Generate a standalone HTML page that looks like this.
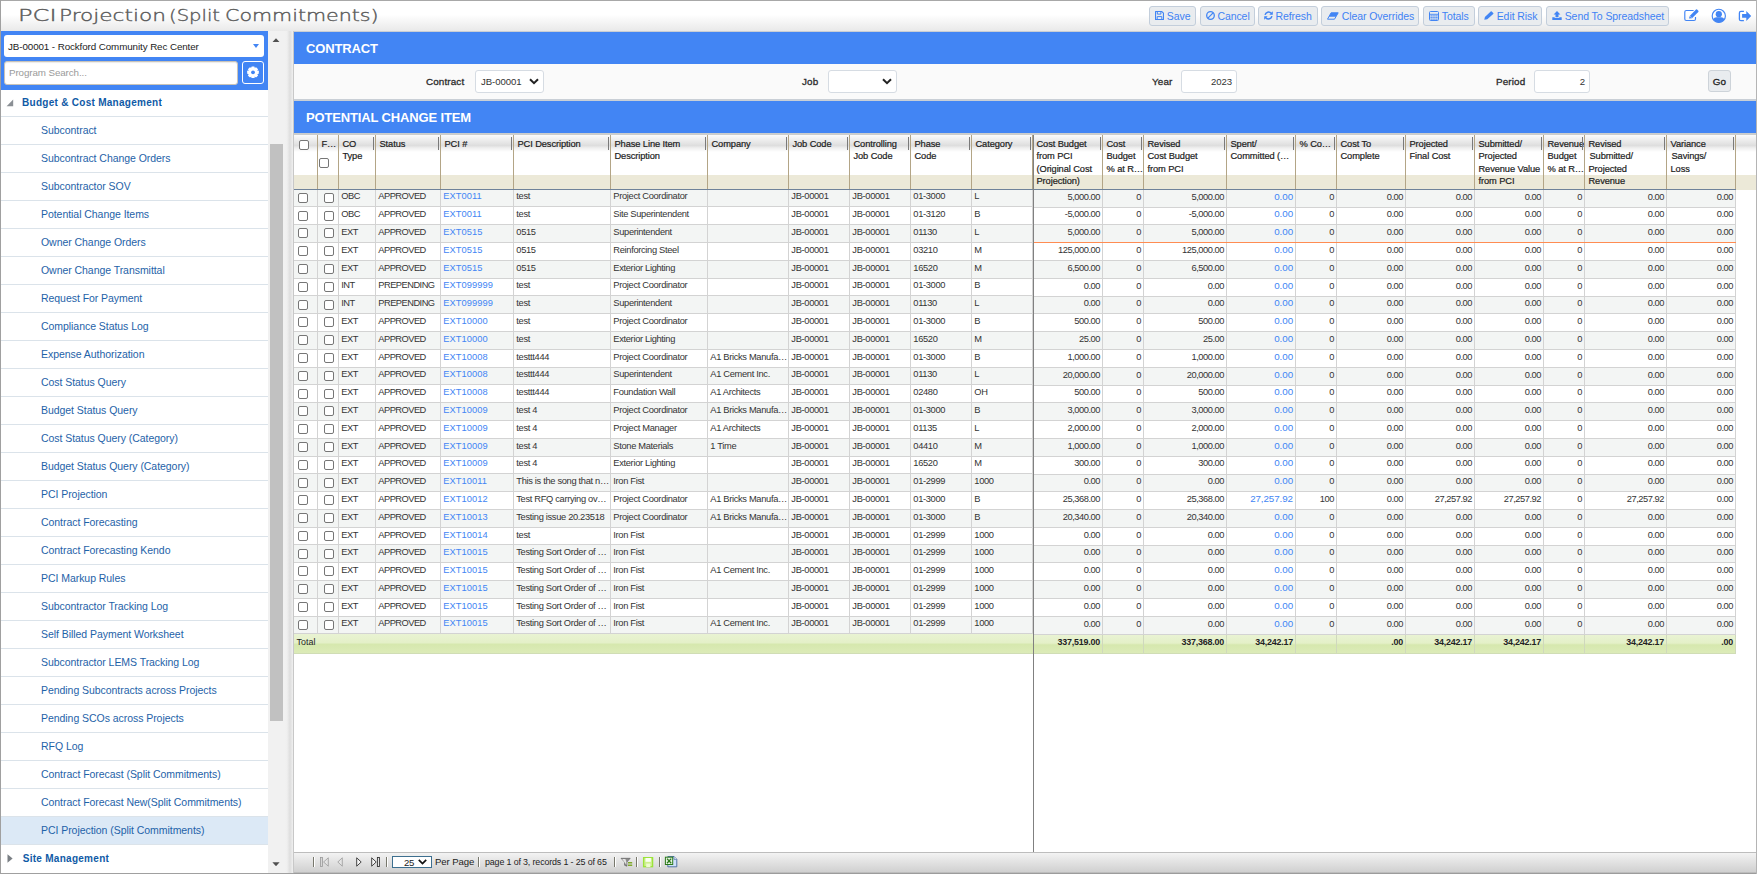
<!DOCTYPE html><html lang="en"><head><meta charset="utf-8"><title>PCI Projection (Split Commitments)</title><style>
*{box-sizing:border-box;margin:0;padding:0}
html,body{width:1757px;height:874px;overflow:hidden;background:#fff}
body{position:relative;font-family:"Liberation Sans",Arial,sans-serif;font-size:8.9px;color:#333}
.abs{position:absolute}
#top{left:0;top:0;width:1757px;height:31px;background:linear-gradient(#fff 0,#fff 45%,#e9e9e9 100%);border-top:1px solid #a8a8a8}
#lb{left:0;top:0;width:1px;height:874px;background:#a0a0a0;z-index:50}
#rb{left:1756px;top:0;width:1px;height:874px;background:#b4b4b4;z-index:50}
#bb{left:0;top:873px;width:294px;height:1px;background:#a0a0a0;z-index:50}
#title{left:20px;top:5.5px;width:370px;height:20px;font-family:"DejaVu Sans Light","DejaVu Sans",sans-serif;font-weight:200;font-size:15.2px;line-height:20px;color:#5a5a5a;white-space:nowrap;-webkit-text-stroke:.35px #5a5a5a}#title span{position:absolute;top:0;display:block;transform-origin:0 50%}
.tb{position:absolute;top:6px;height:20px;border:1px solid #c3cedb;border-radius:3px;background:#e9ecef;color:#3f82f4;font-size:10.5px;letter-spacing:-.07px;line-height:17px;white-space:nowrap;display:flex;align-items:center;padding-left:5px}
.tb svg{flex:none;margin-right:2.4px;margin-top:-1px;display:block}
.tb span{display:block}
.ti{position:absolute;top:8px}
#sbh{left:1px;top:31px;width:267px;height:59px;background:#4285f4}
#dd{left:4px;top:35px;width:260px;height:22px;background:#fff;border-radius:3px;font-size:9.8px;line-height:23px;padding-left:4px;color:#222;white-space:nowrap;letter-spacing:-.09px}
#ddarrow{left:252.8px;top:44px;width:0;height:0;border-left:3.5px solid transparent;border-right:3.5px solid transparent;border-top:4px solid #4285f4}
#srch{left:4px;top:61px;width:234px;height:24px;background:#fff;border:1px solid #c9c3b8;border-radius:3px;font-size:9.8px;line-height:22px;padding-left:4px;color:#9a9a9a;letter-spacing:-.1px;box-shadow:inset 0 1px 1px rgba(0,0,0,.08)}
#gear{left:242px;top:61px;width:22px;height:23px;border:1px solid #fff;border-radius:3px;background:#4285f4}
#nav{left:1px;top:90px;width:267px;height:783px;background:#fff;overflow:hidden}
.nh{position:absolute;left:0;width:267px;height:27px;border-bottom:1px solid #dbe3ea;font-weight:bold;font-size:10px;color:#0f5aa6;line-height:26px;padding-left:21px;letter-spacing:.28px;white-space:nowrap}
.ni{position:absolute;left:0;width:267px;height:28px;border-bottom:1px solid #dbe3ea;font-size:10.5px;color:#1e62a8;line-height:27.4px;padding-left:40px;white-space:nowrap;letter-spacing:-.05px}
.ni.sel{background:#dce9f6}
#vsb{left:268px;top:31px;width:17px;height:843px;background:#f1f1f1}
#vth{left:270px;top:144px;width:13px;height:577px;background:#c1c1c1}
#split{left:285px;top:31px;width:8px;height:843px;background:linear-gradient(to right,#f1f1f1 0,#efefef 25%,#dedede 62%,#e6e6e6 80%,#f0f0f0 100%)}
#splitb{left:293px;top:31px;width:1px;height:843px;background:#c8c8c8}
#main{left:294px;top:31px;width:1462px;height:843px;background:#fff}
.ph{position:absolute;left:294px;width:1462px;height:32px;background:#4285f4;color:#fff;font-weight:bold;font-size:13px;line-height:33px;padding-left:12px;white-space:nowrap;letter-spacing:-.15px}
#form{left:294px;top:64px;width:1462px;height:35px;background:#fafafa}
#formb{left:294px;top:99px;width:1462px;height:2px;background:#c9cfd6}
.fl{position:absolute;top:70px;height:22px;line-height:23.6px;font-size:9.9px;font-weight:normal;color:#2b2b2b;white-space:nowrap;-webkit-text-stroke:.3px #2b2b2b;letter-spacing:.12px}
.fi{position:absolute;top:70px;height:23px;border:1px solid #d6dce3;border-radius:3px;background:#fff;font-size:9.6px;line-height:22px;color:#333;white-space:nowrap;letter-spacing:-.06px}
#grid{left:294px;top:133px;width:1462px;height:719px;background:#fff;overflow:hidden;border-top:2px solid #cbcdcd}
#hdr{left:0;top:0;width:1462px;height:55px;background:
 linear-gradient(#6f8299,#6f8299) 0 54px/1442px 1px no-repeat,
 linear-gradient(#ece9d8,#ece9d8) 0 40px/100% 15px no-repeat,
 linear-gradient(#fbfbfb 0,#f3f3f3 3px,#dedede 10.500px,#efefef 13px,#fff 17px) 0 0/100% 17px no-repeat,#fff;
}
.hc{position:absolute;top:0;height:54px;border-right:1px solid #b3a586;font-size:9.3px;line-height:12.46px;color:#1c1c1c;padding:2.6px 0 0 3.5px;overflow:hidden;white-space:nowrap;letter-spacing:-.1px;-webkit-text-stroke:.2px #1c1c1c}
.hh{position:absolute;top:2px;width:1px;height:13px;background:#7a7a7a}
.row{position:absolute}
.c{position:absolute;top:0;height:100%;border-right:1px solid #d3d3d3;border-bottom:1px solid #d3d3d3;font-size:9.3px;line-height:12px;padding:0 0 0 2.3px;overflow:hidden;white-space:nowrap;color:#333;letter-spacing:-.32px}
.c.u{letter-spacing:-.52px}.c.r{text-align:right;padding:0 2px 0 0;letter-spacing:-.45px}
.c a{color:#4285f4;text-decoration:none;letter-spacing:.05px}.lnk{color:#4285f4;font-size:9.8px;letter-spacing:-.08px}
.odd .c{background:#f3f5f4}
.cb{position:absolute;width:10px;height:10px;border:1px solid #767676;border-radius:2px;background:#fff}
.tot{position:absolute;height:20px;background:linear-gradient(#e9f3d3 0,#e4f0c8 45%,#d6e8ae 55%,#dcebb8 100%);font-size:8.9px;line-height:12px;color:#222;border-bottom:1px solid #d0ddb5}
.tc{position:absolute;top:0;height:18px;border-right:1px solid #cfd8bd;font-weight:bold;text-align:right;padding:1px 2px 0 0;letter-spacing:-.2px;white-space:nowrap}
#vsplit{left:739px;top:0;width:1px;height:717px;background:#808080;z-index:5}
#orange{left:740px;top:107px;width:702px;height:1px;background:#ff8c52;z-index:6}
#pager{left:294px;top:852px;width:1462px;height:22px;border-top:1px solid #bdbdbd;background:linear-gradient(#f3f3f3 0,#e3e3e3 40%,#d0d0d0 91%,#9c9c9c 96%,#9c9c9c 100%);font-size:8.9px;color:#222}
.ps{position:absolute;top:4px;width:2px;height:10px;background:linear-gradient(to right,#77776c 0,#77776c 50%,#fff 50%,#fff 100%)}
.pt{position:absolute;top:0;line-height:18px;white-space:nowrap;font-size:9.6px;letter-spacing:-.1px}
</style></head><body><div class="abs" id="lb"></div><div class="abs" id="rb"></div><div class="abs" id="bb"></div><div class="abs" id="top"></div><div class="abs" id="title"><span style="left:-1.56px;transform:scaleX(1.593)">PCI</span> <span style="left:38.91px;transform:scaleX(1.424)">Projection</span> <span style="left:149.41px;transform:scaleX(1.289)">(Split</span> <span style="left:205.14px;transform:scaleX(1.357)">Commitments)</span> </div><div class="tb" style="left:1149.4px;width:46.3px"><svg width="9" height="9" viewBox="0 0 9 9"><path d="M.55 .55h6.300l1.600 1.600v6.300H.55z" fill="none" stroke="#4285f4" stroke-width="1.100" stroke-linejoin="round"/><path d="M2.300 .6v2.500h3.600V.6M2.200 8.400V5.600h4.600v2.800" fill="none" stroke="#4285f4" stroke-width="1"/></svg><span>Save</span></div><div class="tb" style="left:1200px;width:54.7px"><svg width="9" height="9" viewBox="0 0 9 9"><circle cx="4.500" cy="4.500" r="3.800" fill="none" stroke="#4285f4" stroke-width="1.300"/><path d="M1.900 7.100L7.100 1.900" stroke="#4285f4" stroke-width="1.300"/></svg><span>Cancel</span></div><div class="tb" style="left:1258px;width:59.6px"><svg width="9" height="9" viewBox="0 0 9 9"><path d="M1.100 3.900A3.500 3.500 0 0 1 7.200 2.300M7.900 5.100A3.500 3.500 0 0 1 1.800 6.700" fill="none" stroke="#4285f4" stroke-width="1.500"/><path d="M8.800 .3v3.500H5.300zM.2 8.700V5.200h3.500z" fill="#4285f4"/></svg><span>Refresh</span></div><div class="tb" style="left:1321.3px;width:98.2px"><svg width="12" height="8" viewBox="0 0 12 8" style="margin-top:0"><path d="M4.100 .8h7.100L7.500 7.200H.5z" fill="none" stroke="#4285f4" stroke-width="1" stroke-linejoin="round"/><path d="M4.100 .8h7.100L8.900 4.800H1.800z" fill="#4285f4"/></svg><span>Clear Overrides</span></div><div class="tb" style="left:1423.4px;width:51.2px"><svg width="10" height="10" viewBox="0 0 10 10"><rect x=".5" y=".5" width="9" height="9" rx="1" fill="none" stroke="#4285f4" stroke-width="1"/><path d="M.5 3.300h9" stroke="#4285f4" stroke-width=".9"/><path d="M1.500 4.700h7M1.500 6.400h7M1.500 8.100h7" stroke="#4285f4" stroke-width="1.100" stroke-dasharray="1.300 .6"/></svg><span>Totals</span></div><div class="tb" style="left:1478.3px;width:64.2px"><svg width="10" height="9" viewBox="0 0 10 9"><path d="M.3 8.800l.6-2.700L6.700 .4a.7.700 0 0 1 1 0l1.500 1.500a.7.700 0 0 1 0 1L3.300 8.300z" fill="#4285f4"/></svg><span>Edit Risk</span></div><div class="tb" style="left:1546.3px;width:123.2px"><svg width="10" height="9" viewBox="0 0 10 9"><path d="M5 0L8.400 3.600H6.500V6.300H3.500V3.600H1.600z" fill="#4285f4"/><path d="M.3 6.200H2.700V7.100H7.300V6.200H9.700V9H.3z" fill="#4285f4"/></svg><span>Send To Spreadsheet</span></div><svg class="abs" style="left:1680px;top:5px" width="76" height="22" viewBox="1680 5 76 22"><g fill="none" stroke="#4285f4"><path d="M1693.600 10.500H1686.300a1.500 1.500 0 0 0-1.500 1.500v7a1.500 1.500 0 0 0 1.500 1.500h7.700a1.500 1.500 0 0 0 1.500-1.500V17" stroke-width="1.150"/><circle cx="1718.800" cy="15.900" r="6.600" stroke-width="1.150"/><path d="M1743.900 11.400h-3a1.500 1.500 0 0 0-1.500 1.500v6.300a1.500 1.500 0 0 0 1.500 1.500h3" stroke-width="1.300"/></g><g fill="#4285f4"><path d="M1689 18.600l.7-2.700 6.300-6.300a.8.800 0 0 1 1.100 0l1.200 1.200a.8.800 0 0 1 0 1.100l-6.300 6.300z"/><circle cx="1718.800" cy="14.200" r="3.100"/><path d="M1713.300 19.600c.5-1.500 1.700-2.300 3.300-2.300h4.400c1.600 0 2.800.8 3.300 2.300a6.700 6.700 0 0 1-11 0z"/><path d="M1742.100 14.100h4.200v-3l4.900 4.850-4.900 4.950v-3.200h-4.200z"/></g><path d="M1690.100 16.300l1.300 1.300" stroke="#fff" stroke-width=".7" fill="none"/></svg><div class="abs" id="sbh"></div><div class="abs" id="dd">JB-00001 - Rockford Community Rec Center</div><div class="abs" id="ddarrow"></div><div class="abs" id="srch">Program Search...</div><div class="abs" id="gear"><svg width="20" height="21" viewBox="0 0 20 21" style="display:block"><g transform="translate(10 10.3) scale(1.12)"><g fill="#fff"><rect x="-1.500" y="-5.200" width="3" height="10.400" rx=".6"/><rect x="-1.500" y="-5.200" width="3" height="10.400" rx=".6" transform="rotate(45)"/><rect x="-1.500" y="-5.200" width="3" height="10.400" rx=".6" transform="rotate(90)"/><rect x="-1.500" y="-5.200" width="3" height="10.400" rx=".6" transform="rotate(135)"/><circle r="3.900"/></g><circle r="1.700" fill="#4285f4"/></g></svg></div><div class="abs" id="nav"><div class="nh" style="top:0">Budget &amp; Cost Management</div><svg class="abs" style="left:5px;top:9px" width="8" height="8" viewBox="0 0 8 8"><path d="M7.200 .6V7.200H.6z" fill="#8a8f94"/></svg><div class="ni" style="top:27px">Subcontract</div><div class="ni" style="top:55px">Subcontract Change Orders</div><div class="ni" style="top:83px">Subcontractor SOV</div><div class="ni" style="top:111px">Potential Change Items</div><div class="ni" style="top:139px">Owner Change Orders</div><div class="ni" style="top:167px">Owner Change Transmittal</div><div class="ni" style="top:195px">Request For Payment</div><div class="ni" style="top:223px">Compliance Status Log</div><div class="ni" style="top:251px">Expense Authorization</div><div class="ni" style="top:279px">Cost Status Query</div><div class="ni" style="top:307px">Budget Status Query</div><div class="ni" style="top:335px">Cost Status Query (Category)</div><div class="ni" style="top:363px">Budget Status Query (Category)</div><div class="ni" style="top:391px">PCI Projection</div><div class="ni" style="top:419px">Contract Forecasting</div><div class="ni" style="top:447px">Contract Forecasting Kendo</div><div class="ni" style="top:475px">PCI Markup Rules</div><div class="ni" style="top:503px">Subcontractor Tracking Log</div><div class="ni" style="top:531px">Self Billed Payment Worksheet</div><div class="ni" style="top:559px">Subcontractor LEMS Tracking Log</div><div class="ni" style="top:587px">Pending Subcontracts across Projects</div><div class="ni" style="top:615px">Pending SCOs across Projects</div><div class="ni" style="top:643px">RFQ Log</div><div class="ni" style="top:671px">Contract Forecast (Split Commitments)</div><div class="ni" style="top:699px">Contract Forecast New(Split Commitments)</div><div class="ni sel" style="top:727px">PCI Projection (Split Commitments)</div><div class="nh" style="top:755px;border-bottom:none;line-height:28.5px;padding-left:21.7px">Site Management</div><svg class="abs" style="left:6px;top:764px" width="6" height="9" viewBox="0 0 6 9"><path d="M.5 .3L5.600 4.500.5 8.700z" fill="#7a7f84"/></svg></div><div class="abs" id="vsb"></div><div class="abs" id="vth"></div><svg class="abs" style="left:272.400px;top:37.800px" width="8" height="4.500" viewBox="0 0 9 5"><path d="M4.500 .3L8.600 4.700H.4z" fill="#505050"/></svg><svg class="abs" style="left:272.400px;top:861.700px" width="8" height="4.500" viewBox="0 0 9 5"><path d="M4.500 4.700L8.600 .3H.4z" fill="#505050"/></svg><div class="abs" id="split"></div><div class="abs" id="splitb"></div><div class="abs" id="main"></div><div class="abs" style="left:294px;top:31px;width:1462px;height:1px;background:#c9ced4"></div><div class="ph" style="top:32px">CONTRACT</div><div class="abs" id="form"></div><div class="abs" id="formb"></div><div class="fl" style="left:426px">Contract</div><div class="fi" style="left:475px;width:69px;padding-left:5px">JB-00001<svg style="position:absolute;right:4.5px;top:6.8px" width="10" height="7" viewBox="0 0 10 7"><path d="M1 1.200L5 5.200 9 1.200" fill="none" stroke="#222" stroke-width="2"/></svg></div><div class="fl" style="left:802px">Job</div><div class="fi" style="left:828px;width:69px"><svg style="position:absolute;right:4.5px;top:6.8px" width="10" height="7" viewBox="0 0 10 7"><path d="M1 1.200L5 5.200 9 1.200" fill="none" stroke="#222" stroke-width="2"/></svg></div><div class="fl" style="left:1152px">Year</div><div class="fi" style="left:1181px;width:56px;text-align:right;padding-right:4px">2023</div><div class="fl" style="left:1496px">Period</div><div class="fi" style="left:1534px;width:56px;text-align:right;padding-right:4px">2</div><div class="fi" style="left:1708px;width:23px;text-align:center;background:#e9ecef;border-color:#cdd3d9;height:22px;line-height:21px;font-size:9.9px;letter-spacing:.1px;-webkit-text-stroke:.3px #222;color:#222">Go</div><div class="ph" style="top:101px">POTENTIAL CHANGE ITEM</div><div class="abs" id="grid"><div class="abs" id="hdr"><div class="hc" style="left:0px;width:24px"></div><div class="hc" style="left:24px;width:21px">F…</div><div class="hc" style="left:45px;width:37px">CO<br>Type</div><div class="hh" style="left:79px"></div><div class="hc" style="left:82px;width:65px">Status</div><div class="hh" style="left:144px"></div><div class="hc" style="left:147px;width:73px">PCI #</div><div class="hh" style="left:217px"></div><div class="hc" style="left:220px;width:97px">PCI Description</div><div class="hh" style="left:314px"></div><div class="hc" style="left:317px;width:97px">Phase Line Item<br>Description</div><div class="hh" style="left:411px"></div><div class="hc" style="left:414px;width:81px">Company</div><div class="hh" style="left:492px"></div><div class="hc" style="left:495px;width:61px">Job Code</div><div class="hh" style="left:553px"></div><div class="hc" style="left:556px;width:61px">Controlling<br>Job Code</div><div class="hh" style="left:614px"></div><div class="hc" style="left:617px;width:61px">Phase<br>Code</div><div class="hh" style="left:675px"></div><div class="hc" style="left:678px;width:61px">Category</div><div class="hh" style="left:736px"></div><div class="hc" style="left:739px;width:70px">Cost Budget<br>from PCI<br>(Original Cost<br>Projection)</div><div class="hh" style="left:806px"></div><div class="hc" style="left:809px;width:41px">Cost<br>Budget<br>% at R…</div><div class="hh" style="left:847px"></div><div class="hc" style="left:850px;width:83px">Revised<br>Cost Budget<br>from PCI</div><div class="hh" style="left:930px"></div><div class="hc" style="left:933px;width:69px">Spent/<br>Committed (…</div><div class="hh" style="left:999px"></div><div class="hc" style="left:1002px;width:41px">% Co…</div><div class="hh" style="left:1040px"></div><div class="hc" style="left:1043px;width:69px">Cost To<br>Complete</div><div class="hh" style="left:1109px"></div><div class="hc" style="left:1112px;width:69px">Projected<br>Final Cost</div><div class="hh" style="left:1178px"></div><div class="hc" style="left:1181px;width:69px">Submitted/<br>Projected<br>Revenue Value<br>from PCI</div><div class="hh" style="left:1247px"></div><div class="hc" style="left:1250px;width:41px">Revenue<br>Budget<br>% at R…</div><div class="hh" style="left:1288px"></div><div class="hc" style="left:1291px;width:82px">Revised<br><span style="margin-left:1px">Submitted/</span><br>Projected<br>Revenue</div><div class="hh" style="left:1370px"></div><div class="hc" style="left:1373px;width:69px">Variance<br><span style="margin-left:1px">Savings/</span><br>Loss</div><div class="hh" style="left:1439px"></div><div class="cb" style="left:5px;top:5px"></div><div class="cb" style="left:24.5px;top:23px"></div></div><div class="row odd" style="left:0;width:739px;top:55px;height:17px"><div class="c" style="left:0px;width:24px"><div class="cb" style="left:4px;top:3px"></div></div><div class="c" style="left:24px;width:21px"><div class="cb" style="left:6px;top:3px"></div></div><div class="c u" style="left:45px;width:37px">OBC</div><div class="c u" style="left:82px;width:65px">APPROVED</div><div class="c" style="left:147px;width:73px"><a>EXT0011</a></div><div class="c" style="left:220px;width:97px">test</div><div class="c" style="left:317px;width:97px">Project Coordinator</div><div class="c" style="left:414px;width:81px"></div><div class="c" style="left:495px;width:61px">JB-00001</div><div class="c" style="left:556px;width:61px">JB-00001</div><div class="c" style="left:617px;width:61px">01-3000</div><div class="c" style="left:678px;width:61px">L</div></div><div class="row odd" style="left:739px;width:703px;top:55px;height:18px"><div class="c r" style="left:0px;width:70px;padding-top:1px">5,000.00</div><div class="c r" style="left:70px;width:41px;padding-top:1px">0</div><div class="c r" style="left:111px;width:83px;padding-top:1px">5,000.00</div><div class="c r" style="left:194px;width:69px;padding-top:1px"><span class="lnk">0.00</span></div><div class="c r" style="left:263px;width:41px;padding-top:1px">0</div><div class="c r" style="left:304px;width:69px;padding-top:1px">0.00</div><div class="c r" style="left:373px;width:69px;padding-top:1px">0.00</div><div class="c r" style="left:442px;width:69px;padding-top:1px">0.00</div><div class="c r" style="left:511px;width:41px;padding-top:1px">0</div><div class="c r" style="left:552px;width:82px;padding-top:1px">0.00</div><div class="c r" style="left:634px;width:69px;padding-top:1px">0.00</div></div><div class="row" style="left:0;width:739px;top:72px;height:18px"><div class="c" style="left:0px;width:24px"><div class="cb" style="left:4px;top:4px"></div></div><div class="c" style="left:24px;width:21px"><div class="cb" style="left:6px;top:4px"></div></div><div class="c u" style="left:45px;width:37px;padding-top:1px">OBC</div><div class="c u" style="left:82px;width:65px;padding-top:1px">APPROVED</div><div class="c" style="left:147px;width:73px;padding-top:1px"><a>EXT0011</a></div><div class="c" style="left:220px;width:97px;padding-top:1px">test</div><div class="c" style="left:317px;width:97px;padding-top:1px">Site Superintendent</div><div class="c" style="left:414px;width:81px;padding-top:1px"></div><div class="c" style="left:495px;width:61px;padding-top:1px">JB-00001</div><div class="c" style="left:556px;width:61px;padding-top:1px">JB-00001</div><div class="c" style="left:617px;width:61px;padding-top:1px">01-3120</div><div class="c" style="left:678px;width:61px;padding-top:1px">B</div></div><div class="row" style="left:739px;width:703px;top:73px;height:17px"><div class="c r" style="left:0px;width:70px">-5,000.00</div><div class="c r" style="left:70px;width:41px">0</div><div class="c r" style="left:111px;width:83px">-5,000.00</div><div class="c r" style="left:194px;width:69px"><span class="lnk">0.00</span></div><div class="c r" style="left:263px;width:41px">0</div><div class="c r" style="left:304px;width:69px">0.00</div><div class="c r" style="left:373px;width:69px">0.00</div><div class="c r" style="left:442px;width:69px">0.00</div><div class="c r" style="left:511px;width:41px">0</div><div class="c r" style="left:552px;width:82px">0.00</div><div class="c r" style="left:634px;width:69px">0.00</div></div><div class="row odd" style="left:0;width:739px;top:90px;height:18px"><div class="c" style="left:0px;width:24px"><div class="cb" style="left:4px;top:3px"></div></div><div class="c" style="left:24px;width:21px"><div class="cb" style="left:6px;top:3px"></div></div><div class="c u" style="left:45px;width:37px;padding-top:1px">EXT</div><div class="c u" style="left:82px;width:65px;padding-top:1px">APPROVED</div><div class="c" style="left:147px;width:73px;padding-top:1px"><a>EXT0515</a></div><div class="c" style="left:220px;width:97px;padding-top:1px">0515</div><div class="c" style="left:317px;width:97px;padding-top:1px">Superintendent</div><div class="c" style="left:414px;width:81px;padding-top:1px"></div><div class="c" style="left:495px;width:61px;padding-top:1px">JB-00001</div><div class="c" style="left:556px;width:61px;padding-top:1px">JB-00001</div><div class="c" style="left:617px;width:61px;padding-top:1px">01130</div><div class="c" style="left:678px;width:61px;padding-top:1px">L</div></div><div class="row odd" style="left:739px;width:703px;top:90px;height:18px"><div class="c r" style="left:0px;width:70px;padding-top:1px">5,000.00</div><div class="c r" style="left:70px;width:41px;padding-top:1px">0</div><div class="c r" style="left:111px;width:83px;padding-top:1px">5,000.00</div><div class="c r" style="left:194px;width:69px;padding-top:1px"><span class="lnk">0.00</span></div><div class="c r" style="left:263px;width:41px;padding-top:1px">0</div><div class="c r" style="left:304px;width:69px;padding-top:1px">0.00</div><div class="c r" style="left:373px;width:69px;padding-top:1px">0.00</div><div class="c r" style="left:442px;width:69px;padding-top:1px">0.00</div><div class="c r" style="left:511px;width:41px;padding-top:1px">0</div><div class="c r" style="left:552px;width:82px;padding-top:1px">0.00</div><div class="c r" style="left:634px;width:69px;padding-top:1px">0.00</div></div><div class="row" style="left:0;width:739px;top:108px;height:18px"><div class="c" style="left:0px;width:24px"><div class="cb" style="left:4px;top:3px"></div></div><div class="c" style="left:24px;width:21px"><div class="cb" style="left:6px;top:3px"></div></div><div class="c u" style="left:45px;width:37px;padding-top:1px">EXT</div><div class="c u" style="left:82px;width:65px;padding-top:1px">APPROVED</div><div class="c" style="left:147px;width:73px;padding-top:1px"><a>EXT0515</a></div><div class="c" style="left:220px;width:97px;padding-top:1px">0515</div><div class="c" style="left:317px;width:97px;padding-top:1px">Reinforcing Steel</div><div class="c" style="left:414px;width:81px;padding-top:1px"></div><div class="c" style="left:495px;width:61px;padding-top:1px">JB-00001</div><div class="c" style="left:556px;width:61px;padding-top:1px">JB-00001</div><div class="c" style="left:617px;width:61px;padding-top:1px">03210</div><div class="c" style="left:678px;width:61px;padding-top:1px">M</div></div><div class="row" style="left:739px;width:703px;top:108px;height:18px"><div class="c r" style="left:0px;width:70px;padding-top:1px">125,000.00</div><div class="c r" style="left:70px;width:41px;padding-top:1px">0</div><div class="c r" style="left:111px;width:83px;padding-top:1px">125,000.00</div><div class="c r" style="left:194px;width:69px;padding-top:1px"><span class="lnk">0.00</span></div><div class="c r" style="left:263px;width:41px;padding-top:1px">0</div><div class="c r" style="left:304px;width:69px;padding-top:1px">0.00</div><div class="c r" style="left:373px;width:69px;padding-top:1px">0.00</div><div class="c r" style="left:442px;width:69px;padding-top:1px">0.00</div><div class="c r" style="left:511px;width:41px;padding-top:1px">0</div><div class="c r" style="left:552px;width:82px;padding-top:1px">0.00</div><div class="c r" style="left:634px;width:69px;padding-top:1px">0.00</div></div><div class="row odd" style="left:0;width:739px;top:126px;height:18px"><div class="c" style="left:0px;width:24px"><div class="cb" style="left:4px;top:3px"></div></div><div class="c" style="left:24px;width:21px"><div class="cb" style="left:6px;top:3px"></div></div><div class="c u" style="left:45px;width:37px;padding-top:1px">EXT</div><div class="c u" style="left:82px;width:65px;padding-top:1px">APPROVED</div><div class="c" style="left:147px;width:73px;padding-top:1px"><a>EXT0515</a></div><div class="c" style="left:220px;width:97px;padding-top:1px">0515</div><div class="c" style="left:317px;width:97px;padding-top:1px">Exterior Lighting</div><div class="c" style="left:414px;width:81px;padding-top:1px"></div><div class="c" style="left:495px;width:61px;padding-top:1px">JB-00001</div><div class="c" style="left:556px;width:61px;padding-top:1px">JB-00001</div><div class="c" style="left:617px;width:61px;padding-top:1px">16520</div><div class="c" style="left:678px;width:61px;padding-top:1px">M</div></div><div class="row odd" style="left:739px;width:703px;top:126px;height:18px"><div class="c r" style="left:0px;width:70px;padding-top:1px">6,500.00</div><div class="c r" style="left:70px;width:41px;padding-top:1px">0</div><div class="c r" style="left:111px;width:83px;padding-top:1px">6,500.00</div><div class="c r" style="left:194px;width:69px;padding-top:1px"><span class="lnk">0.00</span></div><div class="c r" style="left:263px;width:41px;padding-top:1px">0</div><div class="c r" style="left:304px;width:69px;padding-top:1px">0.00</div><div class="c r" style="left:373px;width:69px;padding-top:1px">0.00</div><div class="c r" style="left:442px;width:69px;padding-top:1px">0.00</div><div class="c r" style="left:511px;width:41px;padding-top:1px">0</div><div class="c r" style="left:552px;width:82px;padding-top:1px">0.00</div><div class="c r" style="left:634px;width:69px;padding-top:1px">0.00</div></div><div class="row" style="left:0;width:739px;top:144px;height:17px"><div class="c" style="left:0px;width:24px"><div class="cb" style="left:4px;top:3px"></div></div><div class="c" style="left:24px;width:21px"><div class="cb" style="left:6px;top:3px"></div></div><div class="c u" style="left:45px;width:37px">INT</div><div class="c u" style="left:82px;width:65px">PREPENDING</div><div class="c" style="left:147px;width:73px"><a>EXT099999</a></div><div class="c" style="left:220px;width:97px">test</div><div class="c" style="left:317px;width:97px">Project Coordinator</div><div class="c" style="left:414px;width:81px"></div><div class="c" style="left:495px;width:61px">JB-00001</div><div class="c" style="left:556px;width:61px">JB-00001</div><div class="c" style="left:617px;width:61px">01-3000</div><div class="c" style="left:678px;width:61px">B</div></div><div class="row" style="left:739px;width:703px;top:144px;height:18px"><div class="c r" style="left:0px;width:70px;padding-top:1px">0.00</div><div class="c r" style="left:70px;width:41px;padding-top:1px">0</div><div class="c r" style="left:111px;width:83px;padding-top:1px">0.00</div><div class="c r" style="left:194px;width:69px;padding-top:1px"><span class="lnk">0.00</span></div><div class="c r" style="left:263px;width:41px;padding-top:1px">0</div><div class="c r" style="left:304px;width:69px;padding-top:1px">0.00</div><div class="c r" style="left:373px;width:69px;padding-top:1px">0.00</div><div class="c r" style="left:442px;width:69px;padding-top:1px">0.00</div><div class="c r" style="left:511px;width:41px;padding-top:1px">0</div><div class="c r" style="left:552px;width:82px;padding-top:1px">0.00</div><div class="c r" style="left:634px;width:69px;padding-top:1px">0.00</div></div><div class="row odd" style="left:0;width:739px;top:161px;height:18px"><div class="c" style="left:0px;width:24px"><div class="cb" style="left:4px;top:4px"></div></div><div class="c" style="left:24px;width:21px"><div class="cb" style="left:6px;top:4px"></div></div><div class="c u" style="left:45px;width:37px;padding-top:1px">INT</div><div class="c u" style="left:82px;width:65px;padding-top:1px">PREPENDING</div><div class="c" style="left:147px;width:73px;padding-top:1px"><a>EXT099999</a></div><div class="c" style="left:220px;width:97px;padding-top:1px">test</div><div class="c" style="left:317px;width:97px;padding-top:1px">Superintendent</div><div class="c" style="left:414px;width:81px;padding-top:1px"></div><div class="c" style="left:495px;width:61px;padding-top:1px">JB-00001</div><div class="c" style="left:556px;width:61px;padding-top:1px">JB-00001</div><div class="c" style="left:617px;width:61px;padding-top:1px">01130</div><div class="c" style="left:678px;width:61px;padding-top:1px">L</div></div><div class="row odd" style="left:739px;width:703px;top:162px;height:17px"><div class="c r" style="left:0px;width:70px">0.00</div><div class="c r" style="left:70px;width:41px">0</div><div class="c r" style="left:111px;width:83px">0.00</div><div class="c r" style="left:194px;width:69px"><span class="lnk">0.00</span></div><div class="c r" style="left:263px;width:41px">0</div><div class="c r" style="left:304px;width:69px">0.00</div><div class="c r" style="left:373px;width:69px">0.00</div><div class="c r" style="left:442px;width:69px">0.00</div><div class="c r" style="left:511px;width:41px">0</div><div class="c r" style="left:552px;width:82px">0.00</div><div class="c r" style="left:634px;width:69px">0.00</div></div><div class="row" style="left:0;width:739px;top:179px;height:18px"><div class="c" style="left:0px;width:24px"><div class="cb" style="left:4px;top:3px"></div></div><div class="c" style="left:24px;width:21px"><div class="cb" style="left:6px;top:3px"></div></div><div class="c u" style="left:45px;width:37px;padding-top:1px">EXT</div><div class="c u" style="left:82px;width:65px;padding-top:1px">APPROVED</div><div class="c" style="left:147px;width:73px;padding-top:1px"><a>EXT10000</a></div><div class="c" style="left:220px;width:97px;padding-top:1px">test</div><div class="c" style="left:317px;width:97px;padding-top:1px">Project Coordinator</div><div class="c" style="left:414px;width:81px;padding-top:1px"></div><div class="c" style="left:495px;width:61px;padding-top:1px">JB-00001</div><div class="c" style="left:556px;width:61px;padding-top:1px">JB-00001</div><div class="c" style="left:617px;width:61px;padding-top:1px">01-3000</div><div class="c" style="left:678px;width:61px;padding-top:1px">B</div></div><div class="row" style="left:739px;width:703px;top:179px;height:18px"><div class="c r" style="left:0px;width:70px;padding-top:1px">500.00</div><div class="c r" style="left:70px;width:41px;padding-top:1px">0</div><div class="c r" style="left:111px;width:83px;padding-top:1px">500.00</div><div class="c r" style="left:194px;width:69px;padding-top:1px"><span class="lnk">0.00</span></div><div class="c r" style="left:263px;width:41px;padding-top:1px">0</div><div class="c r" style="left:304px;width:69px;padding-top:1px">0.00</div><div class="c r" style="left:373px;width:69px;padding-top:1px">0.00</div><div class="c r" style="left:442px;width:69px;padding-top:1px">0.00</div><div class="c r" style="left:511px;width:41px;padding-top:1px">0</div><div class="c r" style="left:552px;width:82px;padding-top:1px">0.00</div><div class="c r" style="left:634px;width:69px;padding-top:1px">0.00</div></div><div class="row odd" style="left:0;width:739px;top:197px;height:18px"><div class="c" style="left:0px;width:24px"><div class="cb" style="left:4px;top:3px"></div></div><div class="c" style="left:24px;width:21px"><div class="cb" style="left:6px;top:3px"></div></div><div class="c u" style="left:45px;width:37px;padding-top:1px">EXT</div><div class="c u" style="left:82px;width:65px;padding-top:1px">APPROVED</div><div class="c" style="left:147px;width:73px;padding-top:1px"><a>EXT10000</a></div><div class="c" style="left:220px;width:97px;padding-top:1px">test</div><div class="c" style="left:317px;width:97px;padding-top:1px">Exterior Lighting</div><div class="c" style="left:414px;width:81px;padding-top:1px"></div><div class="c" style="left:495px;width:61px;padding-top:1px">JB-00001</div><div class="c" style="left:556px;width:61px;padding-top:1px">JB-00001</div><div class="c" style="left:617px;width:61px;padding-top:1px">16520</div><div class="c" style="left:678px;width:61px;padding-top:1px">M</div></div><div class="row odd" style="left:739px;width:703px;top:197px;height:18px"><div class="c r" style="left:0px;width:70px;padding-top:1px">25.00</div><div class="c r" style="left:70px;width:41px;padding-top:1px">0</div><div class="c r" style="left:111px;width:83px;padding-top:1px">25.00</div><div class="c r" style="left:194px;width:69px;padding-top:1px"><span class="lnk">0.00</span></div><div class="c r" style="left:263px;width:41px;padding-top:1px">0</div><div class="c r" style="left:304px;width:69px;padding-top:1px">0.00</div><div class="c r" style="left:373px;width:69px;padding-top:1px">0.00</div><div class="c r" style="left:442px;width:69px;padding-top:1px">0.00</div><div class="c r" style="left:511px;width:41px;padding-top:1px">0</div><div class="c r" style="left:552px;width:82px;padding-top:1px">0.00</div><div class="c r" style="left:634px;width:69px;padding-top:1px">0.00</div></div><div class="row" style="left:0;width:739px;top:215px;height:18px"><div class="c" style="left:0px;width:24px"><div class="cb" style="left:4px;top:3px"></div></div><div class="c" style="left:24px;width:21px"><div class="cb" style="left:6px;top:3px"></div></div><div class="c u" style="left:45px;width:37px;padding-top:1px">EXT</div><div class="c u" style="left:82px;width:65px;padding-top:1px">APPROVED</div><div class="c" style="left:147px;width:73px;padding-top:1px"><a>EXT10008</a></div><div class="c" style="left:220px;width:97px;padding-top:1px">testtt444</div><div class="c" style="left:317px;width:97px;padding-top:1px">Project Coordinator</div><div class="c" style="left:414px;width:81px;padding-top:1px">A1 Bricks Manufa…</div><div class="c" style="left:495px;width:61px;padding-top:1px">JB-00001</div><div class="c" style="left:556px;width:61px;padding-top:1px">JB-00001</div><div class="c" style="left:617px;width:61px;padding-top:1px">01-3000</div><div class="c" style="left:678px;width:61px;padding-top:1px">B</div></div><div class="row" style="left:739px;width:703px;top:215px;height:18px"><div class="c r" style="left:0px;width:70px;padding-top:1px">1,000.00</div><div class="c r" style="left:70px;width:41px;padding-top:1px">0</div><div class="c r" style="left:111px;width:83px;padding-top:1px">1,000.00</div><div class="c r" style="left:194px;width:69px;padding-top:1px"><span class="lnk">0.00</span></div><div class="c r" style="left:263px;width:41px;padding-top:1px">0</div><div class="c r" style="left:304px;width:69px;padding-top:1px">0.00</div><div class="c r" style="left:373px;width:69px;padding-top:1px">0.00</div><div class="c r" style="left:442px;width:69px;padding-top:1px">0.00</div><div class="c r" style="left:511px;width:41px;padding-top:1px">0</div><div class="c r" style="left:552px;width:82px;padding-top:1px">0.00</div><div class="c r" style="left:634px;width:69px;padding-top:1px">0.00</div></div><div class="row odd" style="left:0;width:739px;top:233px;height:17px"><div class="c" style="left:0px;width:24px"><div class="cb" style="left:4px;top:3px"></div></div><div class="c" style="left:24px;width:21px"><div class="cb" style="left:6px;top:3px"></div></div><div class="c u" style="left:45px;width:37px">EXT</div><div class="c u" style="left:82px;width:65px">APPROVED</div><div class="c" style="left:147px;width:73px"><a>EXT10008</a></div><div class="c" style="left:220px;width:97px">testtt444</div><div class="c" style="left:317px;width:97px">Superintendent</div><div class="c" style="left:414px;width:81px">A1 Cement Inc.</div><div class="c" style="left:495px;width:61px">JB-00001</div><div class="c" style="left:556px;width:61px">JB-00001</div><div class="c" style="left:617px;width:61px">01130</div><div class="c" style="left:678px;width:61px">L</div></div><div class="row odd" style="left:739px;width:703px;top:233px;height:18px"><div class="c r" style="left:0px;width:70px;padding-top:1px">20,000.00</div><div class="c r" style="left:70px;width:41px;padding-top:1px">0</div><div class="c r" style="left:111px;width:83px;padding-top:1px">20,000.00</div><div class="c r" style="left:194px;width:69px;padding-top:1px"><span class="lnk">0.00</span></div><div class="c r" style="left:263px;width:41px;padding-top:1px">0</div><div class="c r" style="left:304px;width:69px;padding-top:1px">0.00</div><div class="c r" style="left:373px;width:69px;padding-top:1px">0.00</div><div class="c r" style="left:442px;width:69px;padding-top:1px">0.00</div><div class="c r" style="left:511px;width:41px;padding-top:1px">0</div><div class="c r" style="left:552px;width:82px;padding-top:1px">0.00</div><div class="c r" style="left:634px;width:69px;padding-top:1px">0.00</div></div><div class="row" style="left:0;width:739px;top:250px;height:18px"><div class="c" style="left:0px;width:24px"><div class="cb" style="left:4px;top:4px"></div></div><div class="c" style="left:24px;width:21px"><div class="cb" style="left:6px;top:4px"></div></div><div class="c u" style="left:45px;width:37px;padding-top:1px">EXT</div><div class="c u" style="left:82px;width:65px;padding-top:1px">APPROVED</div><div class="c" style="left:147px;width:73px;padding-top:1px"><a>EXT10008</a></div><div class="c" style="left:220px;width:97px;padding-top:1px">testtt444</div><div class="c" style="left:317px;width:97px;padding-top:1px">Foundation Wall</div><div class="c" style="left:414px;width:81px;padding-top:1px">A1 Architects</div><div class="c" style="left:495px;width:61px;padding-top:1px">JB-00001</div><div class="c" style="left:556px;width:61px;padding-top:1px">JB-00001</div><div class="c" style="left:617px;width:61px;padding-top:1px">02480</div><div class="c" style="left:678px;width:61px;padding-top:1px">OH</div></div><div class="row" style="left:739px;width:703px;top:251px;height:17px"><div class="c r" style="left:0px;width:70px">500.00</div><div class="c r" style="left:70px;width:41px">0</div><div class="c r" style="left:111px;width:83px">500.00</div><div class="c r" style="left:194px;width:69px"><span class="lnk">0.00</span></div><div class="c r" style="left:263px;width:41px">0</div><div class="c r" style="left:304px;width:69px">0.00</div><div class="c r" style="left:373px;width:69px">0.00</div><div class="c r" style="left:442px;width:69px">0.00</div><div class="c r" style="left:511px;width:41px">0</div><div class="c r" style="left:552px;width:82px">0.00</div><div class="c r" style="left:634px;width:69px">0.00</div></div><div class="row odd" style="left:0;width:739px;top:268px;height:18px"><div class="c" style="left:0px;width:24px"><div class="cb" style="left:4px;top:3px"></div></div><div class="c" style="left:24px;width:21px"><div class="cb" style="left:6px;top:3px"></div></div><div class="c u" style="left:45px;width:37px;padding-top:1px">EXT</div><div class="c u" style="left:82px;width:65px;padding-top:1px">APPROVED</div><div class="c" style="left:147px;width:73px;padding-top:1px"><a>EXT10009</a></div><div class="c" style="left:220px;width:97px;padding-top:1px">test 4</div><div class="c" style="left:317px;width:97px;padding-top:1px">Project Coordinator</div><div class="c" style="left:414px;width:81px;padding-top:1px">A1 Bricks Manufa…</div><div class="c" style="left:495px;width:61px;padding-top:1px">JB-00001</div><div class="c" style="left:556px;width:61px;padding-top:1px">JB-00001</div><div class="c" style="left:617px;width:61px;padding-top:1px">01-3000</div><div class="c" style="left:678px;width:61px;padding-top:1px">B</div></div><div class="row odd" style="left:739px;width:703px;top:268px;height:18px"><div class="c r" style="left:0px;width:70px;padding-top:1px">3,000.00</div><div class="c r" style="left:70px;width:41px;padding-top:1px">0</div><div class="c r" style="left:111px;width:83px;padding-top:1px">3,000.00</div><div class="c r" style="left:194px;width:69px;padding-top:1px"><span class="lnk">0.00</span></div><div class="c r" style="left:263px;width:41px;padding-top:1px">0</div><div class="c r" style="left:304px;width:69px;padding-top:1px">0.00</div><div class="c r" style="left:373px;width:69px;padding-top:1px">0.00</div><div class="c r" style="left:442px;width:69px;padding-top:1px">0.00</div><div class="c r" style="left:511px;width:41px;padding-top:1px">0</div><div class="c r" style="left:552px;width:82px;padding-top:1px">0.00</div><div class="c r" style="left:634px;width:69px;padding-top:1px">0.00</div></div><div class="row" style="left:0;width:739px;top:286px;height:18px"><div class="c" style="left:0px;width:24px"><div class="cb" style="left:4px;top:3px"></div></div><div class="c" style="left:24px;width:21px"><div class="cb" style="left:6px;top:3px"></div></div><div class="c u" style="left:45px;width:37px;padding-top:1px">EXT</div><div class="c u" style="left:82px;width:65px;padding-top:1px">APPROVED</div><div class="c" style="left:147px;width:73px;padding-top:1px"><a>EXT10009</a></div><div class="c" style="left:220px;width:97px;padding-top:1px">test 4</div><div class="c" style="left:317px;width:97px;padding-top:1px">Project Manager</div><div class="c" style="left:414px;width:81px;padding-top:1px">A1 Architects</div><div class="c" style="left:495px;width:61px;padding-top:1px">JB-00001</div><div class="c" style="left:556px;width:61px;padding-top:1px">JB-00001</div><div class="c" style="left:617px;width:61px;padding-top:1px">01135</div><div class="c" style="left:678px;width:61px;padding-top:1px">L</div></div><div class="row" style="left:739px;width:703px;top:286px;height:18px"><div class="c r" style="left:0px;width:70px;padding-top:1px">2,000.00</div><div class="c r" style="left:70px;width:41px;padding-top:1px">0</div><div class="c r" style="left:111px;width:83px;padding-top:1px">2,000.00</div><div class="c r" style="left:194px;width:69px;padding-top:1px"><span class="lnk">0.00</span></div><div class="c r" style="left:263px;width:41px;padding-top:1px">0</div><div class="c r" style="left:304px;width:69px;padding-top:1px">0.00</div><div class="c r" style="left:373px;width:69px;padding-top:1px">0.00</div><div class="c r" style="left:442px;width:69px;padding-top:1px">0.00</div><div class="c r" style="left:511px;width:41px;padding-top:1px">0</div><div class="c r" style="left:552px;width:82px;padding-top:1px">0.00</div><div class="c r" style="left:634px;width:69px;padding-top:1px">0.00</div></div><div class="row odd" style="left:0;width:739px;top:304px;height:18px"><div class="c" style="left:0px;width:24px"><div class="cb" style="left:4px;top:3px"></div></div><div class="c" style="left:24px;width:21px"><div class="cb" style="left:6px;top:3px"></div></div><div class="c u" style="left:45px;width:37px;padding-top:1px">EXT</div><div class="c u" style="left:82px;width:65px;padding-top:1px">APPROVED</div><div class="c" style="left:147px;width:73px;padding-top:1px"><a>EXT10009</a></div><div class="c" style="left:220px;width:97px;padding-top:1px">test 4</div><div class="c" style="left:317px;width:97px;padding-top:1px">Stone Materials</div><div class="c" style="left:414px;width:81px;padding-top:1px">1 Time</div><div class="c" style="left:495px;width:61px;padding-top:1px">JB-00001</div><div class="c" style="left:556px;width:61px;padding-top:1px">JB-00001</div><div class="c" style="left:617px;width:61px;padding-top:1px">04410</div><div class="c" style="left:678px;width:61px;padding-top:1px">M</div></div><div class="row odd" style="left:739px;width:703px;top:304px;height:18px"><div class="c r" style="left:0px;width:70px;padding-top:1px">1,000.00</div><div class="c r" style="left:70px;width:41px;padding-top:1px">0</div><div class="c r" style="left:111px;width:83px;padding-top:1px">1,000.00</div><div class="c r" style="left:194px;width:69px;padding-top:1px"><span class="lnk">0.00</span></div><div class="c r" style="left:263px;width:41px;padding-top:1px">0</div><div class="c r" style="left:304px;width:69px;padding-top:1px">0.00</div><div class="c r" style="left:373px;width:69px;padding-top:1px">0.00</div><div class="c r" style="left:442px;width:69px;padding-top:1px">0.00</div><div class="c r" style="left:511px;width:41px;padding-top:1px">0</div><div class="c r" style="left:552px;width:82px;padding-top:1px">0.00</div><div class="c r" style="left:634px;width:69px;padding-top:1px">0.00</div></div><div class="row" style="left:0;width:739px;top:322px;height:17px"><div class="c" style="left:0px;width:24px"><div class="cb" style="left:4px;top:3px"></div></div><div class="c" style="left:24px;width:21px"><div class="cb" style="left:6px;top:3px"></div></div><div class="c u" style="left:45px;width:37px">EXT</div><div class="c u" style="left:82px;width:65px">APPROVED</div><div class="c" style="left:147px;width:73px"><a>EXT10009</a></div><div class="c" style="left:220px;width:97px">test 4</div><div class="c" style="left:317px;width:97px">Exterior Lighting</div><div class="c" style="left:414px;width:81px"></div><div class="c" style="left:495px;width:61px">JB-00001</div><div class="c" style="left:556px;width:61px">JB-00001</div><div class="c" style="left:617px;width:61px">16520</div><div class="c" style="left:678px;width:61px">M</div></div><div class="row" style="left:739px;width:703px;top:322px;height:18px"><div class="c r" style="left:0px;width:70px">300.00</div><div class="c r" style="left:70px;width:41px">0</div><div class="c r" style="left:111px;width:83px">300.00</div><div class="c r" style="left:194px;width:69px"><span class="lnk">0.00</span></div><div class="c r" style="left:263px;width:41px">0</div><div class="c r" style="left:304px;width:69px">0.00</div><div class="c r" style="left:373px;width:69px">0.00</div><div class="c r" style="left:442px;width:69px">0.00</div><div class="c r" style="left:511px;width:41px">0</div><div class="c r" style="left:552px;width:82px">0.00</div><div class="c r" style="left:634px;width:69px">0.00</div></div><div class="row odd" style="left:0;width:739px;top:339px;height:18px"><div class="c" style="left:0px;width:24px"><div class="cb" style="left:4px;top:4px"></div></div><div class="c" style="left:24px;width:21px"><div class="cb" style="left:6px;top:4px"></div></div><div class="c u" style="left:45px;width:37px;padding-top:1px">EXT</div><div class="c u" style="left:82px;width:65px;padding-top:1px">APPROVED</div><div class="c" style="left:147px;width:73px;padding-top:1px"><a>EXT10011</a></div><div class="c" style="left:220px;width:97px;padding-top:1px">This is the song that n…</div><div class="c" style="left:317px;width:97px;padding-top:1px">Iron Fist</div><div class="c" style="left:414px;width:81px;padding-top:1px"></div><div class="c" style="left:495px;width:61px;padding-top:1px">JB-00001</div><div class="c" style="left:556px;width:61px;padding-top:1px">JB-00001</div><div class="c" style="left:617px;width:61px;padding-top:1px">01-2999</div><div class="c" style="left:678px;width:61px;padding-top:1px">1000</div></div><div class="row odd" style="left:739px;width:703px;top:340px;height:17px"><div class="c r" style="left:0px;width:70px">0.00</div><div class="c r" style="left:70px;width:41px">0</div><div class="c r" style="left:111px;width:83px">0.00</div><div class="c r" style="left:194px;width:69px"><span class="lnk">0.00</span></div><div class="c r" style="left:263px;width:41px">0</div><div class="c r" style="left:304px;width:69px">0.00</div><div class="c r" style="left:373px;width:69px">0.00</div><div class="c r" style="left:442px;width:69px">0.00</div><div class="c r" style="left:511px;width:41px">0</div><div class="c r" style="left:552px;width:82px">0.00</div><div class="c r" style="left:634px;width:69px">0.00</div></div><div class="row" style="left:0;width:739px;top:357px;height:18px"><div class="c" style="left:0px;width:24px"><div class="cb" style="left:4px;top:3px"></div></div><div class="c" style="left:24px;width:21px"><div class="cb" style="left:6px;top:3px"></div></div><div class="c u" style="left:45px;width:37px;padding-top:1px">EXT</div><div class="c u" style="left:82px;width:65px;padding-top:1px">APPROVED</div><div class="c" style="left:147px;width:73px;padding-top:1px"><a>EXT10012</a></div><div class="c" style="left:220px;width:97px;padding-top:1px">Test RFQ carrying ov…</div><div class="c" style="left:317px;width:97px;padding-top:1px">Project Coordinator</div><div class="c" style="left:414px;width:81px;padding-top:1px">A1 Bricks Manufa…</div><div class="c" style="left:495px;width:61px;padding-top:1px">JB-00001</div><div class="c" style="left:556px;width:61px;padding-top:1px">JB-00001</div><div class="c" style="left:617px;width:61px;padding-top:1px">01-3000</div><div class="c" style="left:678px;width:61px;padding-top:1px">B</div></div><div class="row" style="left:739px;width:703px;top:357px;height:18px"><div class="c r" style="left:0px;width:70px;padding-top:1px">25,368.00</div><div class="c r" style="left:70px;width:41px;padding-top:1px">0</div><div class="c r" style="left:111px;width:83px;padding-top:1px">25,368.00</div><div class="c r" style="left:194px;width:69px;padding-top:1px"><span class="lnk">27,257.92</span></div><div class="c r" style="left:263px;width:41px;padding-top:1px">100</div><div class="c r" style="left:304px;width:69px;padding-top:1px">0.00</div><div class="c r" style="left:373px;width:69px;padding-top:1px">27,257.92</div><div class="c r" style="left:442px;width:69px;padding-top:1px">27,257.92</div><div class="c r" style="left:511px;width:41px;padding-top:1px">0</div><div class="c r" style="left:552px;width:82px;padding-top:1px">27,257.92</div><div class="c r" style="left:634px;width:69px;padding-top:1px">0.00</div></div><div class="row odd" style="left:0;width:739px;top:375px;height:18px"><div class="c" style="left:0px;width:24px"><div class="cb" style="left:4px;top:3px"></div></div><div class="c" style="left:24px;width:21px"><div class="cb" style="left:6px;top:3px"></div></div><div class="c u" style="left:45px;width:37px;padding-top:1px">EXT</div><div class="c u" style="left:82px;width:65px;padding-top:1px">APPROVED</div><div class="c" style="left:147px;width:73px;padding-top:1px"><a>EXT10013</a></div><div class="c" style="left:220px;width:97px;padding-top:1px">Testing issue 20.23518</div><div class="c" style="left:317px;width:97px;padding-top:1px">Project Coordinator</div><div class="c" style="left:414px;width:81px;padding-top:1px">A1 Bricks Manufa…</div><div class="c" style="left:495px;width:61px;padding-top:1px">JB-00001</div><div class="c" style="left:556px;width:61px;padding-top:1px">JB-00001</div><div class="c" style="left:617px;width:61px;padding-top:1px">01-3000</div><div class="c" style="left:678px;width:61px;padding-top:1px">B</div></div><div class="row odd" style="left:739px;width:703px;top:375px;height:18px"><div class="c r" style="left:0px;width:70px;padding-top:1px">20,340.00</div><div class="c r" style="left:70px;width:41px;padding-top:1px">0</div><div class="c r" style="left:111px;width:83px;padding-top:1px">20,340.00</div><div class="c r" style="left:194px;width:69px;padding-top:1px"><span class="lnk">0.00</span></div><div class="c r" style="left:263px;width:41px;padding-top:1px">0</div><div class="c r" style="left:304px;width:69px;padding-top:1px">0.00</div><div class="c r" style="left:373px;width:69px;padding-top:1px">0.00</div><div class="c r" style="left:442px;width:69px;padding-top:1px">0.00</div><div class="c r" style="left:511px;width:41px;padding-top:1px">0</div><div class="c r" style="left:552px;width:82px;padding-top:1px">0.00</div><div class="c r" style="left:634px;width:69px;padding-top:1px">0.00</div></div><div class="row" style="left:0;width:739px;top:393px;height:17px"><div class="c" style="left:0px;width:24px"><div class="cb" style="left:4px;top:3px"></div></div><div class="c" style="left:24px;width:21px"><div class="cb" style="left:6px;top:3px"></div></div><div class="c u" style="left:45px;width:37px;padding-top:1px">EXT</div><div class="c u" style="left:82px;width:65px;padding-top:1px">APPROVED</div><div class="c" style="left:147px;width:73px;padding-top:1px"><a>EXT10014</a></div><div class="c" style="left:220px;width:97px;padding-top:1px">test</div><div class="c" style="left:317px;width:97px;padding-top:1px">Iron Fist</div><div class="c" style="left:414px;width:81px;padding-top:1px"></div><div class="c" style="left:495px;width:61px;padding-top:1px">JB-00001</div><div class="c" style="left:556px;width:61px;padding-top:1px">JB-00001</div><div class="c" style="left:617px;width:61px;padding-top:1px">01-2999</div><div class="c" style="left:678px;width:61px;padding-top:1px">1000</div></div><div class="row" style="left:739px;width:703px;top:393px;height:18px"><div class="c r" style="left:0px;width:70px;padding-top:1px">0.00</div><div class="c r" style="left:70px;width:41px;padding-top:1px">0</div><div class="c r" style="left:111px;width:83px;padding-top:1px">0.00</div><div class="c r" style="left:194px;width:69px;padding-top:1px"><span class="lnk">0.00</span></div><div class="c r" style="left:263px;width:41px;padding-top:1px">0</div><div class="c r" style="left:304px;width:69px;padding-top:1px">0.00</div><div class="c r" style="left:373px;width:69px;padding-top:1px">0.00</div><div class="c r" style="left:442px;width:69px;padding-top:1px">0.00</div><div class="c r" style="left:511px;width:41px;padding-top:1px">0</div><div class="c r" style="left:552px;width:82px;padding-top:1px">0.00</div><div class="c r" style="left:634px;width:69px;padding-top:1px">0.00</div></div><div class="row odd" style="left:0;width:739px;top:410px;height:18px"><div class="c" style="left:0px;width:24px"><div class="cb" style="left:4px;top:4px"></div></div><div class="c" style="left:24px;width:21px"><div class="cb" style="left:6px;top:4px"></div></div><div class="c u" style="left:45px;width:37px;padding-top:1px">EXT</div><div class="c u" style="left:82px;width:65px;padding-top:1px">APPROVED</div><div class="c" style="left:147px;width:73px;padding-top:1px"><a>EXT10015</a></div><div class="c" style="left:220px;width:97px;padding-top:1px">Testing Sort Order of …</div><div class="c" style="left:317px;width:97px;padding-top:1px">Iron Fist</div><div class="c" style="left:414px;width:81px;padding-top:1px"></div><div class="c" style="left:495px;width:61px;padding-top:1px">JB-00001</div><div class="c" style="left:556px;width:61px;padding-top:1px">JB-00001</div><div class="c" style="left:617px;width:61px;padding-top:1px">01-2999</div><div class="c" style="left:678px;width:61px;padding-top:1px">1000</div></div><div class="row odd" style="left:739px;width:703px;top:411px;height:17px"><div class="c r" style="left:0px;width:70px">0.00</div><div class="c r" style="left:70px;width:41px">0</div><div class="c r" style="left:111px;width:83px">0.00</div><div class="c r" style="left:194px;width:69px"><span class="lnk">0.00</span></div><div class="c r" style="left:263px;width:41px">0</div><div class="c r" style="left:304px;width:69px">0.00</div><div class="c r" style="left:373px;width:69px">0.00</div><div class="c r" style="left:442px;width:69px">0.00</div><div class="c r" style="left:511px;width:41px">0</div><div class="c r" style="left:552px;width:82px">0.00</div><div class="c r" style="left:634px;width:69px">0.00</div></div><div class="row" style="left:0;width:739px;top:428px;height:18px"><div class="c" style="left:0px;width:24px"><div class="cb" style="left:4px;top:3px"></div></div><div class="c" style="left:24px;width:21px"><div class="cb" style="left:6px;top:3px"></div></div><div class="c u" style="left:45px;width:37px;padding-top:1px">EXT</div><div class="c u" style="left:82px;width:65px;padding-top:1px">APPROVED</div><div class="c" style="left:147px;width:73px;padding-top:1px"><a>EXT10015</a></div><div class="c" style="left:220px;width:97px;padding-top:1px">Testing Sort Order of …</div><div class="c" style="left:317px;width:97px;padding-top:1px">Iron Fist</div><div class="c" style="left:414px;width:81px;padding-top:1px">A1 Cement Inc.</div><div class="c" style="left:495px;width:61px;padding-top:1px">JB-00001</div><div class="c" style="left:556px;width:61px;padding-top:1px">JB-00001</div><div class="c" style="left:617px;width:61px;padding-top:1px">01-2999</div><div class="c" style="left:678px;width:61px;padding-top:1px">1000</div></div><div class="row" style="left:739px;width:703px;top:428px;height:18px"><div class="c r" style="left:0px;width:70px;padding-top:1px">0.00</div><div class="c r" style="left:70px;width:41px;padding-top:1px">0</div><div class="c r" style="left:111px;width:83px;padding-top:1px">0.00</div><div class="c r" style="left:194px;width:69px;padding-top:1px"><span class="lnk">0.00</span></div><div class="c r" style="left:263px;width:41px;padding-top:1px">0</div><div class="c r" style="left:304px;width:69px;padding-top:1px">0.00</div><div class="c r" style="left:373px;width:69px;padding-top:1px">0.00</div><div class="c r" style="left:442px;width:69px;padding-top:1px">0.00</div><div class="c r" style="left:511px;width:41px;padding-top:1px">0</div><div class="c r" style="left:552px;width:82px;padding-top:1px">0.00</div><div class="c r" style="left:634px;width:69px;padding-top:1px">0.00</div></div><div class="row odd" style="left:0;width:739px;top:446px;height:18px"><div class="c" style="left:0px;width:24px"><div class="cb" style="left:4px;top:3px"></div></div><div class="c" style="left:24px;width:21px"><div class="cb" style="left:6px;top:3px"></div></div><div class="c u" style="left:45px;width:37px;padding-top:1px">EXT</div><div class="c u" style="left:82px;width:65px;padding-top:1px">APPROVED</div><div class="c" style="left:147px;width:73px;padding-top:1px"><a>EXT10015</a></div><div class="c" style="left:220px;width:97px;padding-top:1px">Testing Sort Order of …</div><div class="c" style="left:317px;width:97px;padding-top:1px">Iron Fist</div><div class="c" style="left:414px;width:81px;padding-top:1px"></div><div class="c" style="left:495px;width:61px;padding-top:1px">JB-00001</div><div class="c" style="left:556px;width:61px;padding-top:1px">JB-00001</div><div class="c" style="left:617px;width:61px;padding-top:1px">01-2999</div><div class="c" style="left:678px;width:61px;padding-top:1px">1000</div></div><div class="row odd" style="left:739px;width:703px;top:446px;height:18px"><div class="c r" style="left:0px;width:70px;padding-top:1px">0.00</div><div class="c r" style="left:70px;width:41px;padding-top:1px">0</div><div class="c r" style="left:111px;width:83px;padding-top:1px">0.00</div><div class="c r" style="left:194px;width:69px;padding-top:1px"><span class="lnk">0.00</span></div><div class="c r" style="left:263px;width:41px;padding-top:1px">0</div><div class="c r" style="left:304px;width:69px;padding-top:1px">0.00</div><div class="c r" style="left:373px;width:69px;padding-top:1px">0.00</div><div class="c r" style="left:442px;width:69px;padding-top:1px">0.00</div><div class="c r" style="left:511px;width:41px;padding-top:1px">0</div><div class="c r" style="left:552px;width:82px;padding-top:1px">0.00</div><div class="c r" style="left:634px;width:69px;padding-top:1px">0.00</div></div><div class="row" style="left:0;width:739px;top:464px;height:18px"><div class="c" style="left:0px;width:24px"><div class="cb" style="left:4px;top:3px"></div></div><div class="c" style="left:24px;width:21px"><div class="cb" style="left:6px;top:3px"></div></div><div class="c u" style="left:45px;width:37px;padding-top:1px">EXT</div><div class="c u" style="left:82px;width:65px;padding-top:1px">APPROVED</div><div class="c" style="left:147px;width:73px;padding-top:1px"><a>EXT10015</a></div><div class="c" style="left:220px;width:97px;padding-top:1px">Testing Sort Order of …</div><div class="c" style="left:317px;width:97px;padding-top:1px">Iron Fist</div><div class="c" style="left:414px;width:81px;padding-top:1px"></div><div class="c" style="left:495px;width:61px;padding-top:1px">JB-00001</div><div class="c" style="left:556px;width:61px;padding-top:1px">JB-00001</div><div class="c" style="left:617px;width:61px;padding-top:1px">01-2999</div><div class="c" style="left:678px;width:61px;padding-top:1px">1000</div></div><div class="row" style="left:739px;width:703px;top:464px;height:18px"><div class="c r" style="left:0px;width:70px;padding-top:1px">0.00</div><div class="c r" style="left:70px;width:41px;padding-top:1px">0</div><div class="c r" style="left:111px;width:83px;padding-top:1px">0.00</div><div class="c r" style="left:194px;width:69px;padding-top:1px"><span class="lnk">0.00</span></div><div class="c r" style="left:263px;width:41px;padding-top:1px">0</div><div class="c r" style="left:304px;width:69px;padding-top:1px">0.00</div><div class="c r" style="left:373px;width:69px;padding-top:1px">0.00</div><div class="c r" style="left:442px;width:69px;padding-top:1px">0.00</div><div class="c r" style="left:511px;width:41px;padding-top:1px">0</div><div class="c r" style="left:552px;width:82px;padding-top:1px">0.00</div><div class="c r" style="left:634px;width:69px;padding-top:1px">0.00</div></div><div class="row odd" style="left:0;width:739px;top:482px;height:17px"><div class="c" style="left:0px;width:24px"><div class="cb" style="left:4px;top:3px"></div></div><div class="c" style="left:24px;width:21px"><div class="cb" style="left:6px;top:3px"></div></div><div class="c u" style="left:45px;width:37px">EXT</div><div class="c u" style="left:82px;width:65px">APPROVED</div><div class="c" style="left:147px;width:73px"><a>EXT10015</a></div><div class="c" style="left:220px;width:97px">Testing Sort Order of …</div><div class="c" style="left:317px;width:97px">Iron Fist</div><div class="c" style="left:414px;width:81px">A1 Cement Inc.</div><div class="c" style="left:495px;width:61px">JB-00001</div><div class="c" style="left:556px;width:61px">JB-00001</div><div class="c" style="left:617px;width:61px">01-2999</div><div class="c" style="left:678px;width:61px">1000</div></div><div class="row odd" style="left:739px;width:703px;top:482px;height:18px"><div class="c r" style="left:0px;width:70px;padding-top:1px">0.00</div><div class="c r" style="left:70px;width:41px;padding-top:1px">0</div><div class="c r" style="left:111px;width:83px;padding-top:1px">0.00</div><div class="c r" style="left:194px;width:69px;padding-top:1px"><span class="lnk">0.00</span></div><div class="c r" style="left:263px;width:41px;padding-top:1px">0</div><div class="c r" style="left:304px;width:69px;padding-top:1px">0.00</div><div class="c r" style="left:373px;width:69px;padding-top:1px">0.00</div><div class="c r" style="left:442px;width:69px;padding-top:1px">0.00</div><div class="c r" style="left:511px;width:41px;padding-top:1px">0</div><div class="c r" style="left:552px;width:82px;padding-top:1px">0.00</div><div class="c r" style="left:634px;width:69px;padding-top:1px">0.00</div></div><div class="tot" style="left:0;top:499px;height:20px;width:739px;padding:2px 0 0 2.5px;letter-spacing:.08px">Total</div><div class="tot" style="left:739px;top:500px;height:19px;width:703px"><div class="tc" style="left:0px;width:70px">337,519.00</div><div class="tc" style="left:70px;width:41px"></div><div class="tc" style="left:111px;width:83px">337,368.00</div><div class="tc" style="left:194px;width:69px">34,242.17</div><div class="tc" style="left:263px;width:41px"></div><div class="tc" style="left:304px;width:69px">.00</div><div class="tc" style="left:373px;width:69px">34,242.17</div><div class="tc" style="left:442px;width:69px">34,242.17</div><div class="tc" style="left:511px;width:41px"></div><div class="tc" style="left:552px;width:82px">34,242.17</div><div class="tc" style="left:634px;width:69px">.00</div></div><div class="abs" id="vsplit"></div><div class="abs" id="orange"></div></div><div class="abs" id="pager"><div class="ps" style="left:19px"></div><svg class="abs" style="left:26px;top:4px" width="9" height="10" viewBox="0 0 9 10"><rect x=".5" y=".5" width="2" height="9" fill="#d8d8d8" stroke="#9a9a9a" stroke-width=".8"/><path d="M8.300 .8V9.200L3.600 5z" fill="#e4e4e4" stroke="#9a9a9a" stroke-width=".8"/></svg><svg class="abs" style="left:43.200px;top:4px" width="6" height="10" viewBox="0 0 6 10"><path d="M5.300 .8V9.200L.8 5z" fill="#e4e4e4" stroke="#9a9a9a" stroke-width=".8"/></svg><svg class="abs" style="left:62px;top:4px" width="6" height="10" viewBox="0 0 6 10"><path d="M.7 .8V9.200L5.200 5z" fill="#f4f4f4" stroke="#333" stroke-width=".9"/></svg><svg class="abs" style="left:77px;top:4px" width="9" height="10" viewBox="0 0 9 10"><path d="M.7 .8V9.200L5.200 5z" fill="#f4f4f4" stroke="#333" stroke-width=".9"/><rect x="6.400" y=".5" width="2" height="9" fill="#eee" stroke="#333" stroke-width=".9"/></svg><div class="ps" style="left:92px"></div><div class="abs" style="left:98px;top:3px;width:40px;height:12px;border:1px solid #3d6f8f;background:#fff;font-size:9.6px;line-height:11px;text-align:right;padding-right:17px;letter-spacing:-.3px">25<svg style="position:absolute;right:4px;top:1.5px" width="9" height="6" viewBox="0 0 9 6"><path d="M.8 .9L4.500 4.600 8.200 .9" fill="none" stroke="#111" stroke-width="1.700"/></svg></div><div class="pt" style="left:141px">Per Page</div><div class="ps" style="left:184px"></div><div class="pt" style="left:191px;font-size:8.9px;letter-spacing:-.14px">page 1 of 3, records 1 - 25 of 65</div><div class="ps" style="left:320px"></div><svg class="abs" style="left:326px;top:4px" width="14" height="12" viewBox="620 857 14 12"><path d="M621 858.300h9.200l-3.300 3.700v4.200l-2.300-.9v-3.300z" fill="#8c8c8c" stroke="#555" stroke-width=".6"/><path d="M622.200 858.900h3.200l1 3v3z" fill="#e4e4e4"/><path d="M628 862.700h4.200M628 865.200h4.200" stroke="#7fa82c" stroke-width="1.500"/></svg><div class="ps" style="left:342px"></div><svg class="abs" style="left:348px;top:4px" width="12" height="12" viewBox="642 857 12 12"><rect x="643.600" y="857.500" width="9" height="9.200" fill="#cdf08e" stroke="#9be33a" stroke-width="1.300"/><rect x="645.500" y="858" width="5.400" height="3.800" fill="#fbfff2"/><rect x="646.200" y="863.600" width="4.200" height="3.400" fill="#eefbd2"/></svg><div class="ps" style="left:365px"></div><svg class="abs" style="left:370px;top:3px" width="14" height="13" viewBox="664 856 14 13"><path d="M667.800 856.500h6.200l2.800 2.800v7.500h-9z" fill="#cfe0fa" stroke="#45699c" stroke-width=".9"/><path d="M674 856.500v2.800h2.800" fill="#eef4ff" stroke="#45699c" stroke-width=".7"/><rect x="665.400" y="857.200" width="7.300" height="7.300" fill="#e8f5e4" stroke="#2c7a1c" stroke-width="1"/><path d="M667 858.600l4.200 4.600M671.200 858.600l-4.200 4.600" stroke="#2c7a1c" stroke-width="1.300"/></svg></div></body></html>
